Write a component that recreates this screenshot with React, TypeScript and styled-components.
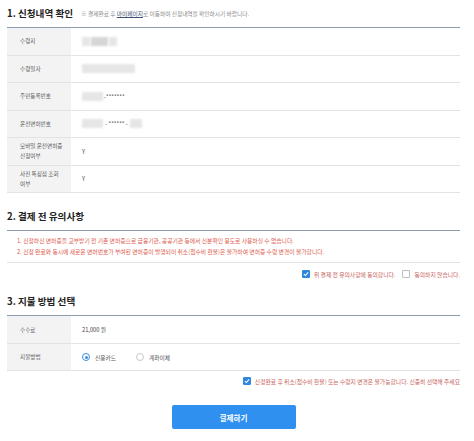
import React from 'react';
import styled, { createGlobalStyle } from 'styled-components';

const GlobalStyle = createGlobalStyle`
  html, body {
    margin: 0;
    padding: 0;
    background: #ffffff;
  }
  body {
    font-family: "Noto Sans CJK KR", "Noto Sans", sans-serif;
    color: #333;
  }
`;

const Page = styled.div`
  width: 474px;
  box-sizing: border-box;
  padding: 4px 14px 0 7px;
`;

const SectionHeader = styled.div<{ $top?: number }>`
  display: flex;
  align-items: center;
  height: 18px;
  margin-top: ${(p) => p.$top ?? 0}px;
  margin-bottom: 5px;
  gap: 8px;
`;

const Title = styled.h2`
  margin: 0;
  font-size: 9.6px;
  font-weight: 700;
  color: #222;
  white-space: nowrap;
`;

const Note = styled.span`
  font-size: 5.7px;
  color: #888;
  white-space: nowrap;
  padding-top: 1px;

  & u {
    color: #3d4f72;
    text-decoration-color: #3d4f72;
  }
`;

const Table = styled.div`
  border-top: 1px solid #8d9bb0;
`;

const Row = styled.div<{ $h?: number }>`
  display: grid;
  grid-template-columns: 64px 1fr;
  height: ${(p) => p.$h ?? 27.5}px;
  box-sizing: border-box;
  border-bottom: 1px solid #e3e3e3;
`;

const Label = styled.div`
  background: #f3f3f3;
  display: flex;
  align-items: center;
  padding-left: 13px;
  font-size: 5.6px;
  line-height: 10px;
  color: #5a5a5a;
`;

const Value = styled.div`
  display: flex;
  align-items: center;
  padding-left: 11px;
  font-size: 5.7px;
  color: #444;
  gap: 1px;
`;

const Redacted = styled.span<{ $w: number; $tone?: string }>`
  display: inline-block;
  width: ${(p) => p.$w}px;
  height: 9px;
  background: ${(p) => p.$tone ?? '#e6e6e6'};
  filter: blur(1px);
`;

const NoticeBox = styled.div`
  border-top: 1px solid #8d9bb0;
  border-bottom: 1px solid #e3e3e3;
  padding: 4px 0 5px 10px;
`;

const NoticeLine = styled.p`
  margin: 0;
  font-size: 5.8px;
  line-height: 11px;
  color: #de5b4c;
  white-space: nowrap;
`;

const AgreeRow = styled.div<{ $top: number }>`
  display: flex;
  justify-content: flex-end;
  align-items: center;
  height: 16px;
  margin-top: ${(p) => p.$top}px;
  gap: 7px;
`;

const Check = styled.label`
  display: flex;
  align-items: center;
  gap: 4px;
  font-size: 5.8px;
  color: #c8625c;
  white-space: nowrap;
`;

const Box = styled.span<{ $on?: boolean }>`
  width: 8px;
  height: 8px;
  box-sizing: border-box;
  border-radius: 1px;
  border: 1px solid ${(p) => (p.$on ? '#2f86de' : '#bdbdbd')};
  background: ${(p) => (p.$on ? '#2f86de' : '#fff')};
  display: flex;
  align-items: center;
  justify-content: center;
`;

const RadioGroup = styled.div`
  display: flex;
  align-items: center;
  gap: 20px;
`;

const Radio = styled.label`
  display: flex;
  align-items: center;
  gap: 5px;
  font-size: 5.7px;
  color: #555;
`;

const RadioDot = styled.span<{ $on?: boolean }>`
  width: 8px;
  height: 8px;
  box-sizing: border-box;
  border-radius: 50%;
  border: 1px solid ${(p) => (p.$on ? '#3b8de0' : '#c9c9c9')};
  display: flex;
  align-items: center;
  justify-content: center;

  &::after {
    content: '';
    width: 3px;
    height: 3px;
    border-radius: 50%;
    background: ${(p) => (p.$on ? '#3b8de0' : 'transparent')};
  }
`;

const ButtonWrap = styled.div`
  display: flex;
  justify-content: center;
  margin-top: 16px;
`;

const PayButton = styled.button`
  width: 124px;
  height: 24px;
  border: none;
  border-radius: 2px;
  background: #2f90f0;
  color: #fff;
  font-family: inherit;
  font-size: 7.6px;
  font-weight: 700;
  cursor: pointer;
`;

const Tick = () => (
  <svg width="6" height="6" viewBox="0 0 10 10">
    <path d="M1.5 5.2 L4 7.6 L8.6 2.4" fill="none" stroke="#fff" strokeWidth="1.8" />
  </svg>
);

export default function App() {
  return (
    <Page>
      <GlobalStyle />

      <SectionHeader>
        <Title>1. 신청내역 확인</Title>
        <Note>
          ※ 결제완료 후 <u>마이페이지</u>로 이동하여 신청내역을 확인하시기 바랍니다.
        </Note>
      </SectionHeader>
      <Table>
        <Row>
          <Label>수령지</Label>
          <Value>
            <Redacted $w={8} />
            <Redacted $w={17} $tone="#d6d6d6" />
            <Redacted $w={8} />
          </Value>
        </Row>
        <Row>
          <Label>수령일자</Label>
          <Value>
            <Redacted $w={53} />
          </Value>
        </Row>
        <Row>
          <Label>주민등록번호</Label>
          <Value>
            <Redacted $w={21} />
            <span>-*******</span>
          </Value>
        </Row>
        <Row>
          <Label>운전면허번호</Label>
          <Value>
            <Redacted $w={21} />
            <span>&nbsp;- ****** -&nbsp;</span>
            <Redacted $w={12} />
          </Value>
        </Row>
        <Row>
          <Label>
            모바일 운전면허증
            <br />
            신청여부
          </Label>
          <Value>Y</Value>
        </Row>
        <Row>
          <Label>
            사진 특징점 조회
            <br />
            여부
          </Label>
          <Value>Y</Value>
        </Row>
      </Table>

      <SectionHeader $top={14}>
        <Title>2. 결제 전 유의사항</Title>
      </SectionHeader>
      <NoticeBox>
        <NoticeLine>
          1. 신청하신 면허증을 교부받기 전 기존 면허증으로 금융기관, 공공기관 등에서 신분확인 용도로 사용하실 수 없습니다.
        </NoticeLine>
        <NoticeLine>
          2. 신청 완료와 동시에 새로운 면허번호가 부여된 면허증이 발행되어 취소(접수비 환불)은 불가하여 면허증 수령 변경이 불가합니다.
        </NoticeLine>
      </NoticeBox>
      <AgreeRow $top={3}>
        <Check>
          <Box $on>
            <Tick />
          </Box>
          위 결제 전 유의사항에 동의합니다.
        </Check>
        <Check>
          <Box />
          동의하지 않습니다.
        </Check>
      </AgreeRow>

      <SectionHeader $top={10}>
        <Title>3. 지불 방법 선택</Title>
      </SectionHeader>
      <Table>
        <Row $h={28}>
          <Label>수수료</Label>
          <Value>21,000 원</Value>
        </Row>
        <Row $h={27}>
          <Label>지불방법</Label>
          <Value>
            <RadioGroup>
              <Radio>
                <RadioDot $on />
                신용카드
              </Radio>
              <Radio>
                <RadioDot />
                계좌이체
              </Radio>
            </RadioGroup>
          </Value>
        </Row>
      </Table>
      <AgreeRow $top={2}>
        <Check>
          <Box $on>
            <Tick />
          </Box>
          신청완료 후 취소(접수비 환불) 또는 수령지 변경은 불가능합니다. 신중히 선택해 주세요
        </Check>
      </AgreeRow>

      <ButtonWrap>
        <PayButton>결제하기</PayButton>
      </ButtonWrap>
    </Page>
  );
}
